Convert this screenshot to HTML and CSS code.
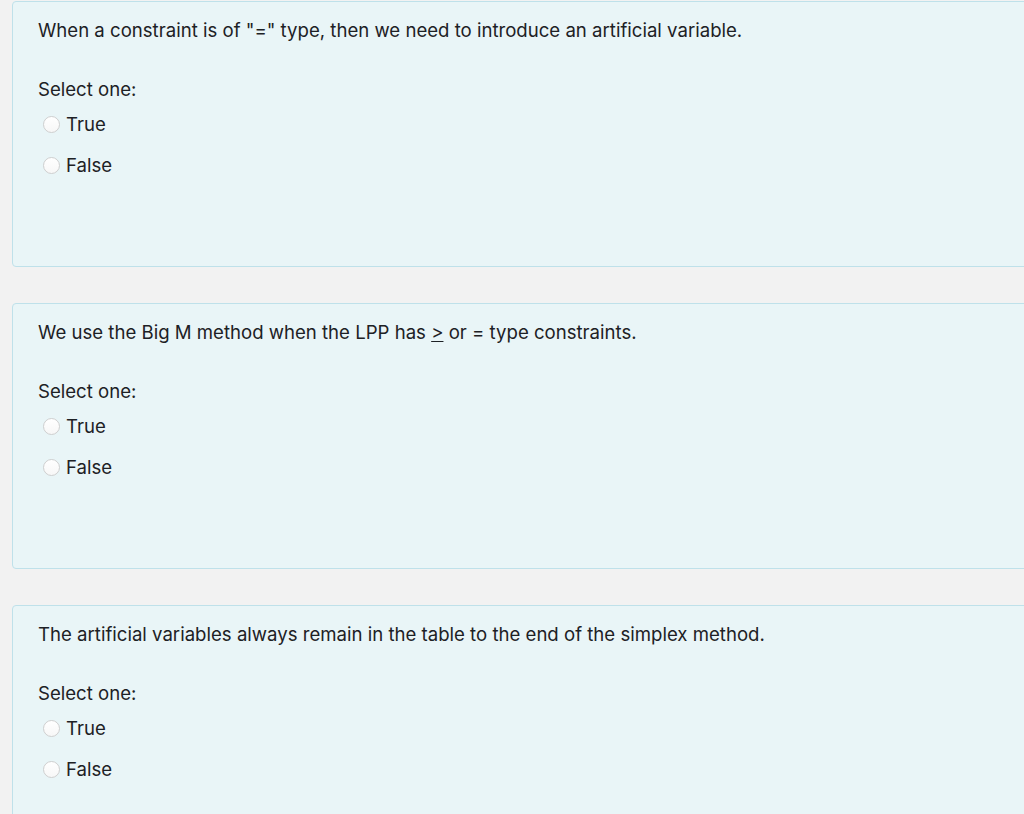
FILE: index.html
```html
<!DOCTYPE html>
<html>
<head>
<meta charset="utf-8">
<link rel="stylesheet" href="styles.css">
</head>
<body>
<div class="page">
  <div class="card">
    <div class="qtext">When a constraint is of "=" type, then we need to introduce an artificial variable.</div>
    <div class="prompt">Select one:</div>
    <div class="answers">
      <label class="opt"><input type="radio" name="q1"><span>True</span></label>
      <label class="opt"><input type="radio" name="q1"><span>False</span></label>
    </div>
  </div>
  <div class="card">
    <div class="qtext">We use the Big M method when the LPP has <u>&gt;</u> or = type constraints.</div>
    <div class="prompt">Select one:</div>
    <div class="answers">
      <label class="opt"><input type="radio" name="q2"><span>True</span></label>
      <label class="opt"><input type="radio" name="q2"><span>False</span></label>
    </div>
  </div>
  <div class="card">
    <div class="qtext">The artificial variables always remain in the table to the end of the simplex method.</div>
    <div class="prompt">Select one:</div>
    <div class="answers">
      <label class="opt"><input type="radio" name="q3"><span>True</span></label>
      <label class="opt"><input type="radio" name="q3"><span>False</span></label>
    </div>
  </div>
</div>
</body>
</html>
```
FILE: styles.css
```css
html, body {
  margin: 0;
  padding: 0;
  background: #f2f2f2;
  overflow: hidden;
}
.page {
  padding-top: 1px;
  padding-left: 12px;
  width: 1040px;
  font-family: Inter, "Liberation Sans", sans-serif;
  font-size: 18.6px;
  color: #1d2125;
}
.card {
  box-sizing: border-box;
  height: 266px;
  margin-bottom: 36px;
  background: #e9f5f7;
  border: 1px solid #bfe1ea;
  border-radius: 4px;
  padding: 15px 25px;
}
.qtext {
  line-height: 27px;
}
.qtext u {
  text-underline-offset: 2px;
}
.prompt {
  line-height: 27px;
  margin-top: 32px;
}
.answers {
  margin-top: 8px;
  display: flex;
  flex-direction: column;
  gap: 14px;
}
.opt {
  display: flex;
  align-items: center;
  line-height: 27px;
}
.opt input {
  appearance: none;
  -webkit-appearance: none;
  box-sizing: border-box;
  width: 17px;
  height: 17px;
  margin: 0 6px 0 5px;
  border: 1px solid #cfcfcf;
  border-radius: 50%;
  background: linear-gradient(#ffffff, #f7f7f7);
}
```
